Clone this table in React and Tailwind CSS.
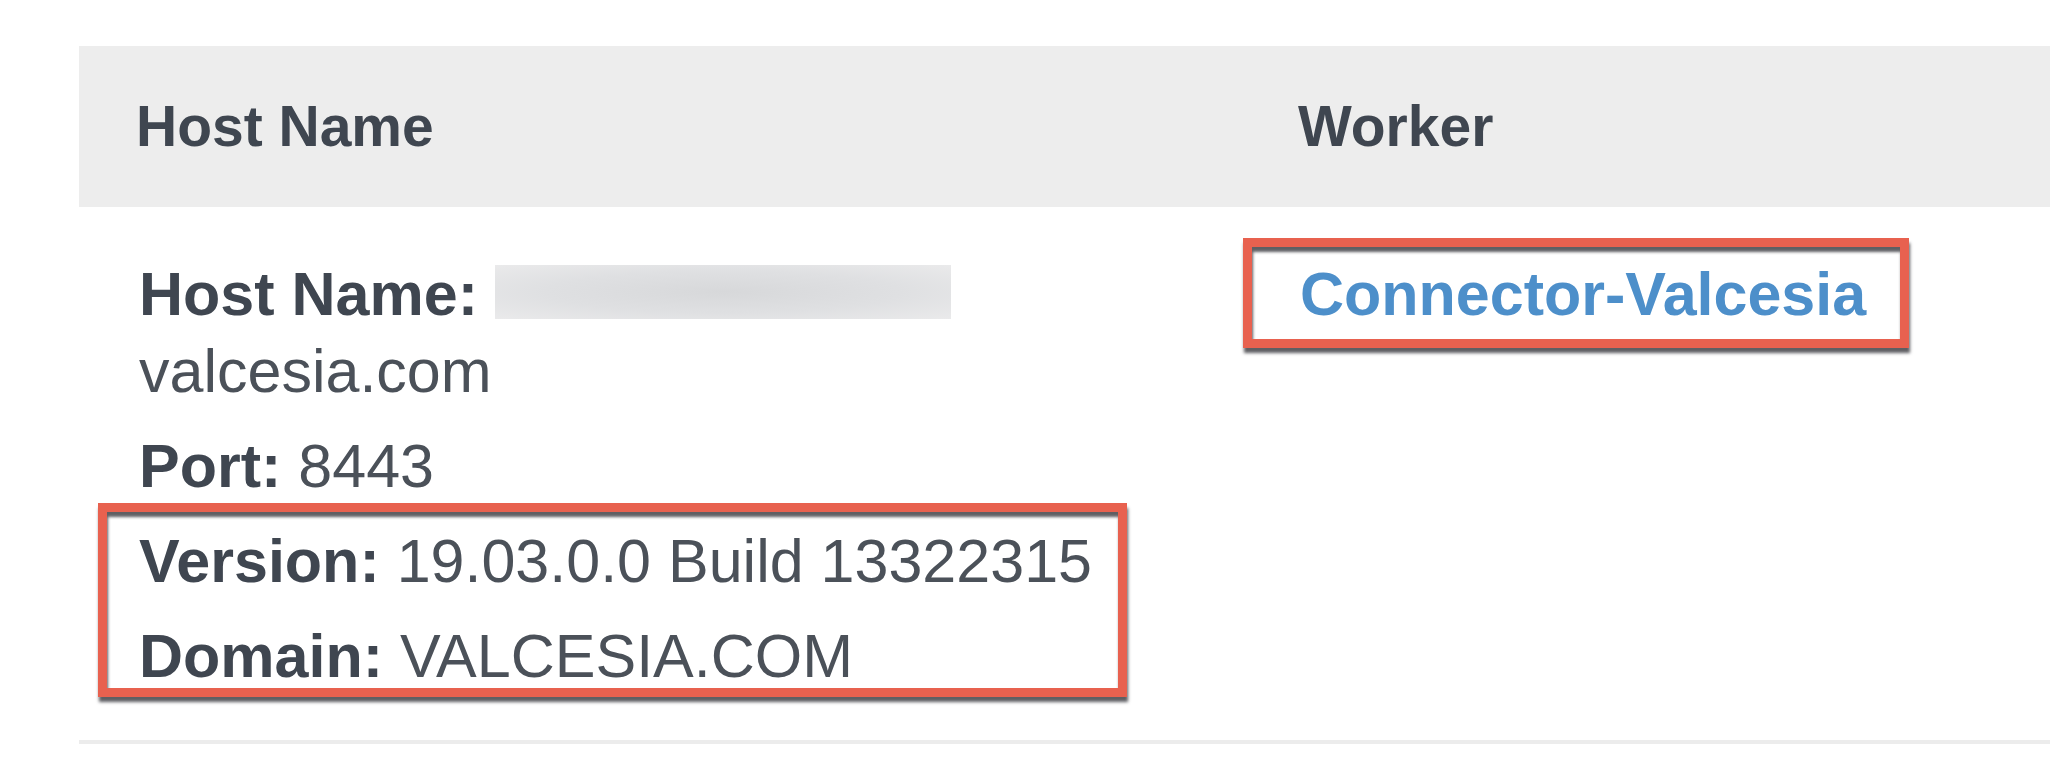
export default function App() {
  const font = { fontFamily: '"Liberation Sans", Arial, Helvetica, sans-serif' };
  return (
    <div className="w-[2056px] h-[778px] bg-white pt-[46px] pl-[79px] overflow-hidden" style={font}>
      <div className="w-[1971px]">
        {/* Header */}
        <div className="flex items-center h-[161px] bg-[#ededed] text-[57px] font-bold text-[#3f4650] leading-none">
          <div className="w-[1219px] pl-[57px]">Host Name</div>
          <div className="flex-1">Worker</div>
        </div>
        {/* Row */}
        <div className="flex items-start border-b-4 border-[#ececec] text-[61px] leading-[77px] text-[#4b5159]">
          <div className="w-[1217px] pl-[60px] pr-[40px] pt-[49px] pb-[45px] flex flex-col gap-[18px]">
            <div>
              <span className="font-bold text-[#3f4650]">Host Name:</span>{' '}
              <span className="inline-block w-[456px] h-[54px] align-[-4px] bg-[radial-gradient(ellipse_at_center,#d7d8da_0%,#dfe0e2_55%,#eaeaeb_100%)]"></span>{' '}
              valcesia.com
            </div>
            <div>
              <span className="font-bold text-[#3f4650]">Port:</span> 8443
            </div>
            <div className="relative flex flex-col gap-[18px]">
              <div>
                <span className="font-bold text-[#3f4650]">Version:</span> 19.03.0.0 Build 13322315
              </div>
              <div>
                <span className="font-bold text-[#3f4650]">Domain:</span> VALCESIA.COM
              </div>
              <div className="absolute left-[-41px] top-[-20px] w-[1029px] h-[194px] border-[9px] border-[#e8614f] shadow-[1px_5px_3px_rgba(55,55,60,0.8),inset_1px_5px_3px_rgba(55,55,60,0.8)]"></div>
            </div>
          </div>
          <div className="flex-1 pl-[4px] pt-[49px]">
            <span className="relative inline-block font-bold text-[#4d8fca]">
              Connector-Valcesia
              <span className="absolute left-[-57px] right-[-43px] top-[-18px] bottom-[-15px] border-[9px] border-[#e8614f] shadow-[1px_5px_3px_rgba(55,55,60,0.8),inset_1px_5px_3px_rgba(55,55,60,0.8)]"></span>
            </span>
          </div>
        </div>
      </div>
    </div>
  );
}
